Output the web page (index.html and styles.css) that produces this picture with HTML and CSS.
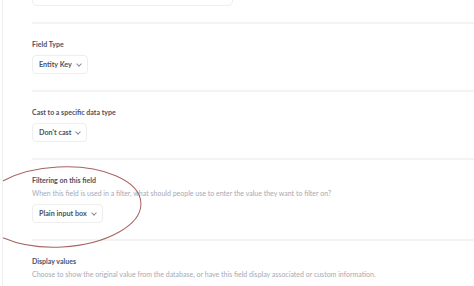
FILE: index.html
```html
<!DOCTYPE html>
<html lang="en">
<head>
    <meta charset="UTF-8">
    <title>Field settings</title>
    <link rel="stylesheet" href="styles.css">
</head>
<body>
    <div class="page">
        <div class="content">
            <div class="top-box"></div>

            <div class="section">
                <div class="label">Field Type</div>
                <div class="select">Entity Key <span class="chev"></span></div>
            </div>

            <div class="section">
                <div class="label">Cast to a specific data type</div>
                <div class="select">Don't cast <span class="chev"></span></div>
            </div>

            <div class="section">
                <div class="label">Filtering on this field</div>
                <div class="desc">When this field is used in a filter, what should people use to enter the value they want to filter on?</div>
                <div class="select">Plain input box <span class="chev"></span></div>
            </div>

            <div class="section">
                <div class="label">Display values</div>
                <div class="desc">Choose to show the original value from the database, or have this field display associated or custom information.</div>
            </div>
        </div>

        <!-- annotation circle drawn over the filtering section -->
        <svg class="mark" width="474" height="286" viewBox="0 0 474 286">
            <ellipse cx="60" cy="207" rx="81" ry="40" transform="rotate(-3 60 207)" fill="none" stroke="#a5645e" stroke-width="1"/>
        </svg>
    </div>
</body>
</html>
```

FILE: styles.css
```css
body {
    margin: 0;
    background: #ffffff;
    font-family: Lato, "Open Sans", sans-serif;
    color: #4a5266;
}
.page {
    position: relative;
    width: 471px;
    height: 286px;
    overflow: hidden;
    border-left: 1px solid #efefef;
    margin-left: 2px;
}
.content {
    padding-left: 29px;
}
.top-box {
    width: 199px;
    height: 14px;
    margin-top: -10px;
    margin-bottom: 16px;
    border: 1px solid #eeeeee;
    border-radius: 5px;
}
.section {
    border-top: 2px solid #f3f3f3;
    padding-top: 16px;
    padding-bottom: 16px;
}
.label {
    font-size: 7px;
    font-weight: 700;
    line-height: 9px;
    margin-bottom: 6px;
}
.desc {
    font-size: 7px;
    line-height: 9px;
    color: #a6a9b4;
    margin-top: -2px;
    margin-bottom: 6px;
}
.select {
    display: flex;
    width: max-content;
    align-items: center;
    height: 17px;
    padding: 0 6px;
    border: 1px solid #eeeeee;
    border-radius: 4px;
    font-size: 7.2px;
    font-weight: 700;
}
.chev {
    width: 3px;
    height: 3px;
    margin-left: 5px;
    margin-top: -2px;
    border-right: 1px solid #8a8f9e;
    border-bottom: 1px solid #8a8f9e;
    transform: rotate(45deg);
}
.section:last-child {
    padding-bottom: 0;
}
.mark {
    position: absolute;
    left: -3px;
    top: 0;
}
```
